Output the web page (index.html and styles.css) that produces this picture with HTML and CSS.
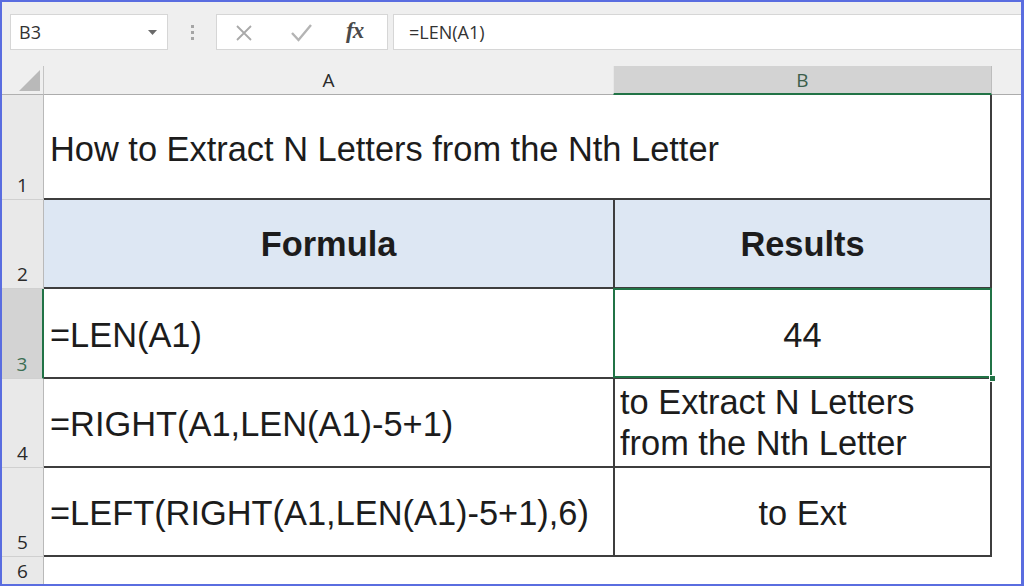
FILE: index.html
```html
<!DOCTYPE html>
<html>
<head>
<meta charset="utf-8">
<link rel="stylesheet" href="styles.css">
</head>
<body>
<div class="frame">
  <div class="toolbar">
    <div class="namebox">
      <span class="nb-text">B3</span>
      <svg class="caret" width="9" height="5" viewBox="0 0 9 5"><path d="M0 0H9L4.5 5Z" fill="#6a6a6a"/></svg>
    </div>
    <div class="grip"><i></i><i></i><i></i></div>
    <div class="fbtns">
      <svg class="ic-x" width="18" height="16" viewBox="0 0 18 16"><path d="M2 1L16 15M16 1L2 15" stroke="#a9a9a9" stroke-width="1.8" fill="none"/></svg>
      <svg class="ic-ok" width="21" height="18" viewBox="0 0 21 18"><path d="M1 9L7.5 16L20 1" stroke="#b4b4b4" stroke-width="2.4" fill="none"/></svg>
      <span class="fx">fx</span>
    </div>
    <div class="finput">=LEN(A1)</div>
  </div>
  <div class="sheet">
    <div class="corner"><svg width="21" height="21" viewBox="0 0 21 21"><path d="M21 0V21H0Z" fill="#b9b9b9"/></svg></div>
    <div class="colhead">A</div>
    <div class="colhead active">B</div>
    <div class="colhead rest"></div>

    <div class="rowhead">1</div>
    <div class="cell a title">How to Extract N Letters from the Nth Letter</div>
    <div class="cell b first"></div>
    <div class="blank"></div>

    <div class="rowhead">2</div>
    <div class="cell a head">Formula</div>
    <div class="cell b head">Results</div>
    <div class="blank"></div>

    <div class="rowhead active">3</div>
    <div class="cell a">=LEN(A1)</div>
    <div class="cell b center selected">44<span class="handle"></span></div>
    <div class="blank"></div>

    <div class="rowhead">4</div>
    <div class="cell a">=RIGHT(A1,LEN(A1)-5+1)</div>
    <div class="cell b wrap">to Extract N Letters<br>from the Nth Letter</div>
    <div class="blank"></div>

    <div class="rowhead">5</div>
    <div class="cell a">=LEFT(RIGHT(A1,LEN(A1)-5+1),6)</div>
    <div class="cell b center">to Ext</div>
    <div class="blank"></div>

    <div class="rowhead last">6</div>
    <div class="blank"></div>
    <div class="blank"></div>
    <div class="blank"></div>
  </div>
</div>
</body>
</html>
```

FILE: styles.css
```css
* { box-sizing: border-box; }
html, body { margin: 0; padding: 0; background: #ffffff; }
.frame {
  width: 1024px;
  height: 586px;
  border-style: solid;
  border-color: #5a6de0;
  border-width: 2px 3px 2px 2px;
  display: flex;
  flex-direction: column;
  background: #ffffff;
  overflow: hidden;
}
.toolbar {
  height: 64px;
  flex: none;
  background: #efefef;
  display: flex;
  align-items: flex-start;
  padding-top: 12px;
  font-family: "Open Sans", "Noto Sans", sans-serif;
}
.namebox {
  margin-left: 8px;
  width: 158px;
  height: 36px;
  background: #ffffff;
  border: 1px solid #d6d6d6;
  display: flex;
  align-items: center;
  justify-content: space-between;
  padding: 0 10px 0 8px;
}
.nb-text { font-size: 18px; color: #333333; }
.caret { margin-top: 1px; }
.grip {
  margin-left: 20px;
  width: 8px;
  height: 36px;
  display: flex;
  flex-direction: column;
  align-items: center;
  justify-content: center;
  gap: 3px;
}
.grip i { display: block; width: 3px; height: 3px; background: #a5a5a5; }
.fbtns {
  margin-left: 20px;
  width: 172px;
  height: 36px;
  background: #ffffff;
  border: 1px solid #d6d6d6;
  display: flex;
  align-items: center;
  padding-left: 18px;
}
.ic-x { margin-top: 1px; }
.ic-ok { margin-left: 38px; margin-top: 2px; }
.fx {
  margin-left: 34px;
  font-family: "Liberation Serif", "DejaVu Serif", serif;
  font-style: italic;
  font-weight: bold;
  font-size: 23px;
  color: #4a4a4a;
  letter-spacing: -1px;
  margin-top: -2px;
}
.finput {
  margin-left: 5px;
  flex: 1;
  height: 36px;
  background: #ffffff;
  border: 1px solid #d6d6d6;
  border-right: none;
  display: flex;
  align-items: center;
  padding-left: 15px;
  font-size: 18px;
  color: #333333;
}
.sheet {
  flex: 1;
  display: grid;
  grid-template-columns: 42px 569px 379px 1fr;
  grid-template-rows: 29px 105px 89px 90px 89px 89px 1fr;
  font-family: "Liberation Sans", Arial, sans-serif;
}
.corner {
  background: #efefef;
  border-right: 1px solid #c4c4c4;
  border-bottom: 1px solid #b0b0b0;
  display: flex;
  align-items: flex-end;
  justify-content: flex-end;
  padding: 0 3px 3px 0;
}
.colhead {
  background: #efefef;
  border-bottom: 1px solid #acacac;
  display: flex;
  align-items: center;
  justify-content: center;
  font-family: "Open Sans", "Noto Sans", sans-serif;
  font-size: 19px;
  color: #2a2a2a;
}
.colhead.active {
  background: #d3d3d3;
  color: #3b5e4b;
  border-left: 1px solid #e8e8e8;
  border-right: 1px solid #bdbdbd;
  border-bottom: 2px solid #217346;
}
.colhead.rest { background: #efefef; }
.rowhead {
  background: #e9e9e9;
  border-right: 1px solid #b9b9b9;
  border-bottom: 1px solid #d0d0d0;
  display: flex;
  align-items: flex-end;
  justify-content: center;
  padding-bottom: 4px;
  font-family: "Open Sans", "Noto Sans", sans-serif;
  font-size: 19px;
  line-height: 1;
  color: #2a2a2a;
}
.rowhead.active {
  background: #d3d3d3;
  color: #3b6e53;
  border-right: 2px solid #217346;
}
.rowhead.last { border-bottom: none; padding-bottom: 3px; }
.cell {
  border-bottom: 2px solid #3e3e3e;
  display: flex;
  align-items: center;
  font-size: 34.4px;
  color: #1c1c1c;
  white-space: nowrap;
  padding-top: 4px;
}
.cell.a { padding-left: 6px; }
.cell.b {
  justify-content: center;
  border-left: 2px solid #3e3e3e;
  border-right: 2px solid #3e3e3e;
}
.cell.b.first { border-left: none; }
.cell.title {
  padding-top: 6px;
  overflow: visible;
  position: relative;
  z-index: 1;
}
.cell.head {
  background: #dde7f3;
  font-weight: bold;
  justify-content: center;
  padding-left: 0;
  padding-top: 2px;
}
.cell.wrap {
  justify-content: flex-start;
  padding-left: 5px;
  line-height: 41px;
  padding-top: 1px;
}
.cell.selected {
  position: relative;
}
.cell.selected::after {
  content: "";
  position: absolute;
  left: -2px;
  top: -1px;
  right: -2px;
  bottom: -1px;
  border: 2px solid #217346;
  pointer-events: none;
}
.handle {
  position: absolute;
  right: -6px;
  bottom: -5px;
  width: 7px;
  height: 7px;
  background: #217346;
  border: 1px solid #ffffff;
  z-index: 2;
}
.blank { background: #ffffff; }
```
